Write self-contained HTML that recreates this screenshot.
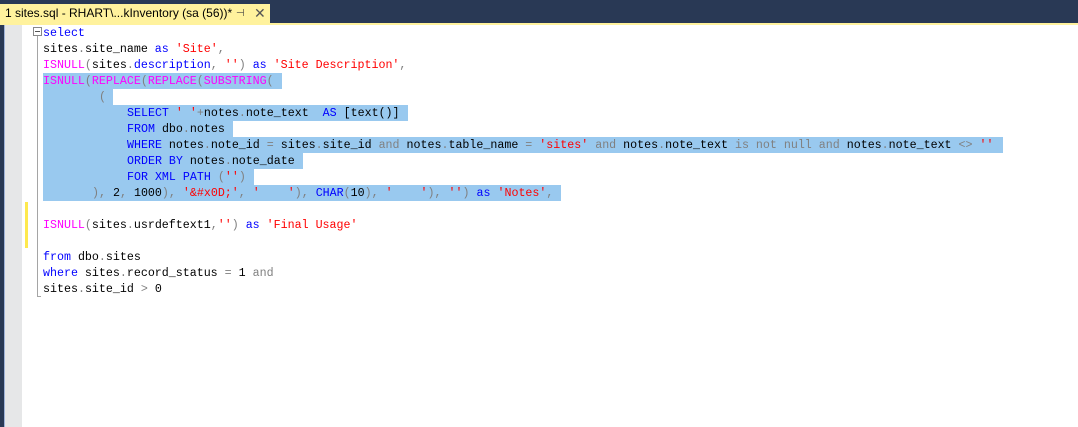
<!DOCTYPE html>
<html><head><meta charset="utf-8"><style>
body{margin:0;width:1078px;height:427px;overflow:hidden;background:#fff;position:relative}
#top{position:absolute;left:0;top:0;width:1078px;height:23px;background:#293955}
#strip{position:absolute;left:0;top:23px;width:1078px;height:2px;background:#fff29d}
#tab{position:absolute;left:0;top:4px;width:270px;height:21px;background:#fff29d;font:12px "Liberation Sans",sans-serif;color:#000;line-height:19px}
#lnav{position:absolute;left:0;top:25px;width:4px;height:402px;background:#293955}
#lb{position:absolute;left:4px;top:25px;width:1px;height:402px;background:#9fb3d8}
#gut{position:absolute;left:5px;top:25px;width:17px;height:402px;background:#e6e7e8}
.l{position:absolute;height:16px;line-height:16px;font-family:"Liberation Mono","DejaVu Sans Mono",monospace;font-size:11.65px;white-space:pre;color:#000}
.sel{position:absolute;left:43px;height:16px;background:#99c9ef}
.k{color:#0000ff}.f{color:#ff00ff}.s{color:#ff0000}.g{color:#808080}
</style></head><body>
<div id="top"></div><div id="strip"></div>
<div id="tab"><span style="position:absolute;left:5px">1 sites.sql - RHART\...kInventory (sa (56))*</span><span style="position:absolute;left:236px;font-size:10px;color:#444">⊣</span><span style="position:absolute;left:254px;font-size:14px;color:#555">✕</span></div>
<div id="lnav"></div><div id="lb"></div><div id="gut"></div>
<div style="position:absolute;left:25px;top:202px;width:3px;height:46px;background:#fee94e"></div>
<div style="position:absolute;left:33px;top:27px;width:7px;height:7px;border:1px solid #888;background:#fff"></div>
<div style="position:absolute;left:35px;top:31px;width:5px;height:1px;background:#555"></div>
<div style="position:absolute;left:37px;top:36px;width:1px;height:260px;background:#a5a5a5"></div>
<div style="position:absolute;left:37px;top:296px;width:4px;height:1px;background:#a5a5a5"></div>
<div class="sel" style="top:73px;width:239px"></div>
<div class="sel" style="top:89px;width:70px"></div>
<div class="sel" style="top:105px;width:365px"></div>
<div class="sel" style="top:121px;width:190px"></div>
<div class="sel" style="top:137px;width:960px"></div>
<div class="sel" style="top:153px;width:260px"></div>
<div class="sel" style="top:169px;width:211px"></div>
<div class="sel" style="top:185px;width:518px"></div>
<div class="l" style="left:43px;top:26px"><span class="k">select</span></div>
<div class="l" style="left:43px;top:42px">sites<span class="g">.</span>site_name <span class="k">as</span> <span class="s">'Site'</span><span class="g">,</span></div>
<div class="l" style="left:43px;top:58px"><span class="f">ISNULL</span><span class="g">(</span>sites<span class="g">.</span><span class="k">description</span><span class="g">,</span> <span class="s">''</span><span class="g">)</span> <span class="k">as</span> <span class="s">'Site Description'</span><span class="g">,</span></div>
<div class="l" style="left:43px;top:74px"><span class="f">ISNULL</span><span class="g">(</span><span class="f">REPLACE</span><span class="g">(</span><span class="f">REPLACE</span><span class="g">(</span><span class="f">SUBSTRING</span><span class="g">(</span></div>
<div class="l" style="left:99px;top:90px"><span class="g">(</span></div>
<div class="l" style="left:127px;top:106px"><span class="k">SELECT</span> <span class="s">' '</span><span class="g">+</span>notes<span class="g">.</span>note_text  <span class="k">AS</span> [text()]</div>
<div class="l" style="left:127px;top:122px"><span class="k">FROM</span> dbo<span class="g">.</span>notes</div>
<div class="l" style="left:127px;top:138px"><span class="k">WHERE</span> notes<span class="g">.</span>note_id <span class="g">=</span> sites<span class="g">.</span>site_id <span class="g">and</span> notes<span class="g">.</span>table_name <span class="g">=</span> <span class="s">'sites'</span> <span class="g">and</span> notes<span class="g">.</span>note_text <span class="g">is not null and</span> notes<span class="g">.</span>note_text <span class="g">&lt;&gt;</span> <span class="s">''</span></div>
<div class="l" style="left:127px;top:154px"><span class="k">ORDER BY</span> notes<span class="g">.</span>note_date</div>
<div class="l" style="left:127px;top:170px"><span class="k">FOR XML PATH</span> <span class="g">(</span><span class="s">''</span><span class="g">)</span></div>
<div class="l" style="left:92px;top:186px"><span class="g">),</span> 2<span class="g">,</span> 1000<span class="g">),</span> <span class="s">'&amp;#x0D;'</span><span class="g">,</span> <span class="s">'    '</span><span class="g">),</span> <span class="k">CHAR</span><span class="g">(</span>10<span class="g">),</span> <span class="s">'    '</span><span class="g">),</span> <span class="s">''</span><span class="g">)</span> <span class="k">as</span> <span class="s">'Notes'</span><span class="g">,</span></div>
<div class="l" style="left:43px;top:218px"><span class="f">ISNULL</span><span class="g">(</span>sites<span class="g">.</span>usrdeftext1<span class="g">,</span><span class="s">''</span><span class="g">)</span> <span class="k">as</span> <span class="s">'Final Usage'</span></div>
<div class="l" style="left:43px;top:250px"><span class="k">from</span> dbo<span class="g">.</span>sites</div>
<div class="l" style="left:43px;top:266px"><span class="k">where</span> sites<span class="g">.</span>record_status <span class="g">=</span> 1 <span class="g">and</span></div>
<div class="l" style="left:43px;top:282px">sites<span class="g">.</span>site_id <span class="g">&gt;</span> 0</div>
</body></html>
